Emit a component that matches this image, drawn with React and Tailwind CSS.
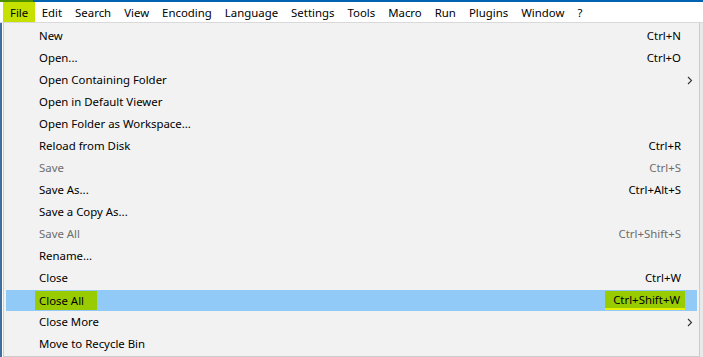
import React from 'react';

const menus = ['File', 'Edit', 'Search', 'View', 'Encoding', 'Language', 'Settings', 'Tools', 'Macro', 'Run', 'Plugins', 'Window', '?'];

const items = [
  { label: 'New', key: 'Ctrl+N' },
  { label: 'Open...', key: 'Ctrl+O' },
  { label: 'Open Containing Folder', sub: true },
  { label: 'Open in Default Viewer' },
  { label: 'Open Folder as Workspace...' },
  { label: 'Reload from Disk', key: 'Ctrl+R' },
  { label: 'Save', key: 'Ctrl+S', disabled: true },
  { label: 'Save As...', key: 'Ctrl+Alt+S' },
  { label: 'Save a Copy As...' },
  { label: 'Save All', key: 'Ctrl+Shift+S', disabled: true },
  { label: 'Rename...' },
  { label: 'Close', key: 'Ctrl+W' },
  { label: 'Close All', key: 'Ctrl+Shift+W', active: true },
  { label: 'Close More', sub: true },
  { label: 'Move to Recycle Bin' },
];

const Chevron = () => (
  <svg width="6" height="9" viewBox="0 0 6 9" className="text-[#333]">
    <path d="M1 1 L4.5 4.5 L1 8" fill="none" stroke="currentColor" strokeWidth="1.1" />
  </svg>
);

export default function App() {
  return (
    <div
      className="w-[703px] h-[357px] overflow-hidden bg-white text-[11.4px] text-black"
      style={{ fontFamily: '"Noto Sans", "Open Sans", sans-serif' }}
    >
      <div className="flex h-[2px]">
        <div className="w-[33px] bg-[#4f8f00]" />
        <div className="flex-1 bg-[#0063b1]" />
      </div>

      <div className="flex h-[21px] items-stretch pl-[3px] border-b border-[#d9d9d9]">
        {menus.map((m, i) => (
          <div
            key={m}
            className={
              i === 0
                ? 'flex items-center pt-[1px] px-[7px] bg-[#c6e000]'
                : 'flex items-center pt-[1px] px-[6.5px]'
            }
          >
            {m}
          </div>
        ))}
      </div>

      <div className="flex h-[334px]">
        <div className="w-[2px] bg-[#3f6f9e]" />
        <div className="w-[1px] bg-white" />
        <div className="w-[697px] border border-t-0 border-[#cccccc] bg-[#f2f2f2] pt-[2px] px-[2px]">
          {items.map((it) => (
            <div
              key={it.label}
              className={
                it.active
                  ? 'flex items-center bg-[#91c9f7] mt-[1px] h-[21px]'
                  : 'flex h-[22px] items-center'
              }
            >
              <div className="w-[29px]" />
              <div className={it.disabled ? 'flex-1 text-[#6d6d6d]' : 'flex-1'}>
                {it.active ? (
                  <span className="inline-flex items-center h-[19px] bg-[#99cc00] pl-[4px] pr-[13px]">{it.label}</span>
                ) : (
                  <span className="pl-[4px]">{it.label}</span>
                )}
              </div>
              <div className={it.disabled ? 'text-[#6d6d6d]' : ''}>
                {it.active ? (
                  <span className="inline-flex items-center h-[19px] bg-[#99cc00] pl-[8px] pr-[5px] -mr-[4px] border-b-2 border-[#e6f000]">{it.key}</span>
                ) : (
                  it.key
                )}
              </div>
              <div className="w-[16px] flex justify-end pr-[4px]">{it.sub ? <Chevron /> : null}</div>
            </div>
          ))}
        </div>
        <div className="flex-1 bg-[#e9e9e9]" />
      </div>
    </div>
  );
}
